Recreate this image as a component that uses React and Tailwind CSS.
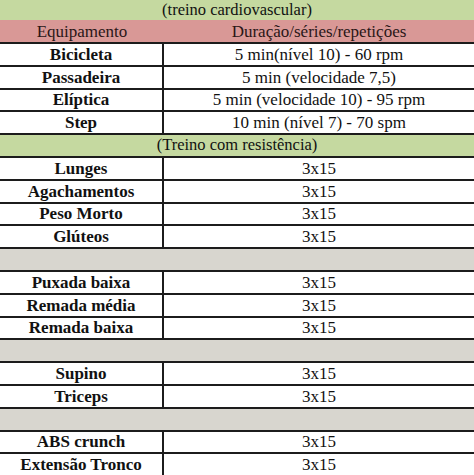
const cardio = [
  ["Bicicleta", "5 min(nível 10) - 60 rpm"],
  ["Passadeira", "5 min (velocidade 7,5)"],
  ["Elíptica", "5 min (velocidade 10) - 95 rpm"],
  ["Step", "10 min (nível 7) - 70 spm"],
];

const groups = [
  ["Lunges", "Agachamentos", "Peso Morto", "Glúteos"],
  ["Puxada baixa", "Remada média", "Remada baixa"],
  ["Supino", "Triceps"],
  ["ABS crunch", "Extensão Tronco"],
];

function DataRow({ name, value }) {
  return (
    <div className="flex h-[22.8px] border-t-2 border-[#1c1c1c] bg-white shrink-0">
      <div className="w-[164px] shrink-0 border-r-2 border-[#1c1c1c] flex items-center justify-center font-bold">
        {name}
      </div>
      <div className="flex-1 flex items-center justify-center">{value}</div>
    </div>
  );
}

function Band({ color, children }) {
  return (
    <div
      className={`flex h-[22.8px] border-t-2 border-[#1c1c1c] items-center justify-center shrink-0 ${color}`}
    >
      {children}
    </div>
  );
}

export default function App() {
  return (
    <div className="w-[474px] h-[475px] overflow-hidden flex flex-col bg-white text-[17px] leading-none text-[#111] font-['Liberation_Serif','Times_New_Roman',serif]">
      <div className="h-[20px] bg-[#c5d9a0] flex items-center justify-center shrink-0 text-[16.5px]">
        (treino cardiovascular)
      </div>
      <div className="flex h-[22px] bg-[#d99896] text-[#2a1616] shrink-0">
        <div className="w-[164px] shrink-0 flex items-center justify-center">
          Equipamento
        </div>
        <div className="flex-1 flex items-center justify-center">
          Duração/séries/repetições
        </div>
      </div>
      {cardio.map(([n, v]) => (
        <DataRow key={n} name={n} value={v} />
      ))}
      <Band color="bg-[#c5d9a0] text-[16.5px]">(Treino com resistência)</Band>
      {groups.map((g, i) => (
        <div key={i} className="contents">
          {i > 0 && <Band color="bg-[#d8d6cf]" />}
          {g.map((n) => (
            <DataRow key={n} name={n} value="3x15" />
          ))}
        </div>
      ))}
    </div>
  );
}
